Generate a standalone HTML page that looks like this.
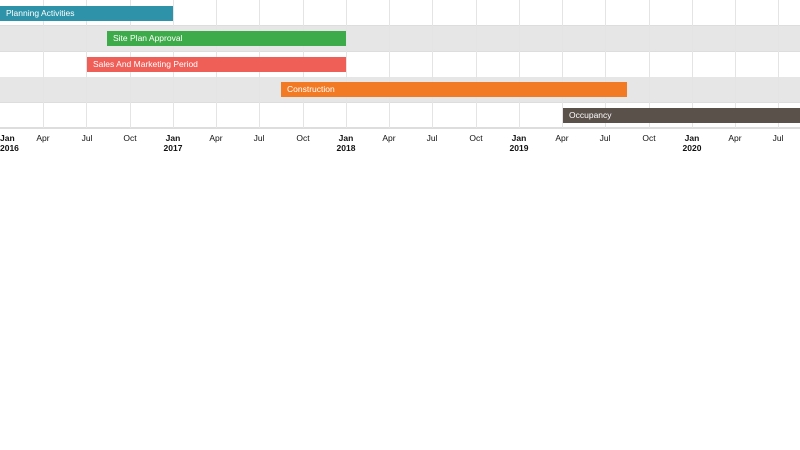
<!DOCTYPE html>
<html><head><style>
body{margin:0;width:800px;height:450px;background:#fff;font-family:"Liberation Sans",sans-serif;position:relative;overflow:hidden}
.row{position:absolute;left:0;width:800px;height:25px;border-bottom:1px solid #ddd}
.g{background:#e6e6e6}
.v{position:absolute;top:0;width:1px;height:128px;background:#e4e4e4}
.g2{background:#fff;opacity:.7}
.bar{position:absolute;height:15px;color:#fff;font-size:8.5px;line-height:15px;padding-left:6px;box-sizing:border-box;white-space:nowrap}
.l{position:absolute;top:133px;font-size:8.5px;color:#111;text-align:center;width:40px;margin-left:-20px;line-height:10px}
.b{font-weight:bold}
</style></head><body>
<div class="row" style="top:0"></div>
<div class="row g" style="top:26px"></div>
<div class="row" style="top:52px"></div>
<div class="row g" style="top:77px"></div>
<div class="row" style="top:103px"></div>
<div style="position:absolute;top:127px;left:0;width:800px;height:2px;background:#ddd"></div>
<div id="grid"></div>
<div class="bar" style="top:6px;left:0;width:173px;background:#2e93a8">Planning Activities</div>
<div class="bar" style="top:31px;left:107px;width:239px;background:#3eab4a">Site Plan Approval</div>
<div class="bar" style="top:57px;left:87px;width:259px;background:#ef5f58">Sales And Marketing Period</div>
<div class="bar" style="top:82px;left:281px;width:346px;background:#f37a25">Construction</div>
<div class="bar" style="top:108px;left:563px;width:237px;background:#5a514b">Occupancy</div>
<div class="l b" style="left:0;margin-left:0;text-align:left">Jan<br>2016</div>
<div class="l" style="left:43px">Apr</div>
<div class="l" style="left:87px">Jul</div>
<div class="l" style="left:130px">Oct</div>
<div class="l b" style="left:173px">Jan<br>2017</div>
<div class="l" style="left:216px">Apr</div>
<div class="l" style="left:259px">Jul</div>
<div class="l" style="left:303px">Oct</div>
<div class="l b" style="left:346px">Jan<br>2018</div>
<div class="l" style="left:389px">Apr</div>
<div class="l" style="left:432px">Jul</div>
<div class="l" style="left:476px">Oct</div>
<div class="l b" style="left:519px">Jan<br>2019</div>
<div class="l" style="left:562px">Apr</div>
<div class="l" style="left:605px">Jul</div>
<div class="l" style="left:649px">Oct</div>
<div class="l b" style="left:692px">Jan<br>2020</div>
<div class="l" style="left:735px">Apr</div>
<div class="l" style="left:778px">Jul</div>
<div class="v" style="left:43px"></div><div class="v" style="left:86px"></div><div class="v" style="left:130px"></div><div class="v" style="left:173px"></div><div class="v" style="left:216px"></div><div class="v" style="left:259px"></div><div class="v" style="left:303px"></div><div class="v" style="left:346px"></div><div class="v" style="left:389px"></div><div class="v" style="left:432px"></div><div class="v" style="left:476px"></div><div class="v" style="left:519px"></div><div class="v" style="left:562px"></div><div class="v" style="left:605px"></div><div class="v" style="left:649px"></div><div class="v" style="left:692px"></div><div class="v" style="left:735px"></div><div class="v" style="left:778px"></div>
<style>.v{z-index:0}.bar{z-index:2}</style>
</body></html>
